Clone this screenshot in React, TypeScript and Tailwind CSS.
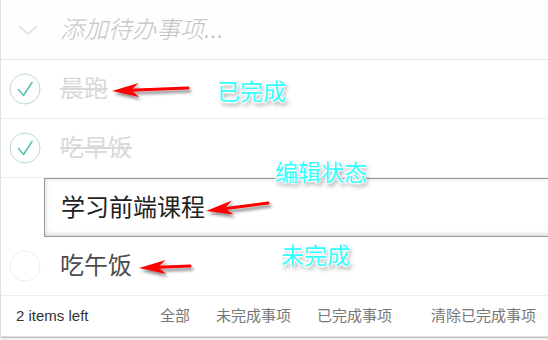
import React from 'react';

const CJK = "font-['Liberation_Sans','Noto_Sans_CJK_SC',sans-serif]";

type Arrow = { from: [number, number]; to: [number, number] };

const ARROWS: Arrow[] = [
  { from: [188, 88], to: [112, 91] },
  { from: [268, 203], to: [206, 211] },
  { from: [190, 266], to: [139, 268] },
];

// Swept-back red arrowhead, computed from tail -> tip direction.
function arrowPoints({ from, to }: Arrow) {
  const dx = to[0] - from[0];
  const dy = to[1] - from[1];
  const len = Math.hypot(dx, dy);
  const ux = dx / len;
  const uy = dy / len;
  const nx = -uy;
  const ny = ux;
  const at = (back: number, side: number) =>
    `${to[0] - ux * back + nx * side},${to[1] - uy * back + ny * side}`;
  const head = [at(0, 0), at(27, 7), at(19, 0), at(27, -7)].join(' ');
  const neck = at(18, 0).split(',').map(Number);
  return { head, neck };
}

function CheckCircle({ done }: { done: boolean }) {
  return (
    <svg width="34" height="34" viewBox="0 0 34 34" className="shrink-0">
      <circle cx="17" cy="17" r="15" fill="none" stroke={done ? '#bddad5' : '#ededed'} strokeWidth="1" />
      {done && (
        <path d="M10.5 17.5l5 6L24 10.5" fill="none" stroke="#5dc2af" strokeWidth="1.6" strokeLinecap="round" strokeLinejoin="round" />
      )}
    </svg>
  );
}

function Label({ text, className }: { text: string; className: string }) {
  return (
    <span
      className={`absolute ${CJK} text-[23px] leading-none text-[#3ff] [text-shadow:0_0_1px_#fff,0_0_2px_#fff,1px_1px_2px_#fff,-1px_-1px_2px_#fff,1px_-1px_2px_#fff,-1px_1px_2px_#fff,2px_3px_4px_rgba(0,0,0,0.55)] ${className}`}
    >
      {text}
    </span>
  );
}

export default function App() {
  const items = [
    { id: 1, title: '晨跑', done: true },
    { id: 2, title: '吃早饭', done: true },
  ];

  return (
    <div className={`relative w-[548px] h-[340px] overflow-hidden bg-[#f5f5f5] ${CJK}`}>
      <section className="w-[560px] bg-white border-l border-[#e0e0e0]">
        {/* Header / new todo */}
        <div className="h-[60px] flex items-center bg-[#fefefe] border-b border-[#e6e6e6]">
          <svg width="20" height="12" viewBox="0 0 20 12" className="ml-[17px] mt-[2px] shrink-0">
            <path d="M2 2l8 7 8-7" fill="none" stroke="#e6e6e6" strokeWidth="2.2" strokeLinecap="round" />
          </svg>
          <span className="ml-[22px] text-[24px] italic font-light text-[#c4c4c4] leading-none">
            添加待办事项...
          </span>
        </div>

        {/* Completed items */}
        {items.map((item) => (
          <div key={item.id} className="h-[59px] flex items-center border-b border-[#ededed]">
            <div className="ml-[7px]">
              <CheckCircle done={item.done} />
            </div>
            <span className="ml-[18px] text-[24px] leading-none text-[#d9d9d9] line-through">
              {item.title}
            </span>
          </div>
        ))}

        {/* Editing item */}
        <div className="h-[59px] pl-[43px]">
          <div className="h-[59px] flex items-center border border-[#999] shadow-[inset_0_-1px_5px_rgba(0,0,0,0.2)] pl-[16px]">
            <span className="text-[24px] leading-none text-[#222]">学习前端课程</span>
          </div>
        </div>

        {/* Active item */}
        <div className="h-[59px] flex items-center border-b border-[#ededed]">
          <div className="ml-[7px]">
            <CheckCircle done={false} />
          </div>
          <span className="ml-[18px] text-[24px] leading-none text-[#4d4d4d]">吃午饭</span>
        </div>

        {/* Footer */}
        <div className="h-[41px] flex items-center text-[15px] text-[#777] border-b border-[#dcdcdc] shadow-[0_1px_1px_rgba(0,0,0,0.2)]">
          <span className="w-[159px] pl-[15px] text-[#333]">2 items left</span>
          <span>全部</span>
          <span className="ml-[26px]">未完成事项</span>
          <span className="ml-[26px]">已完成事项</span>
          <span className="ml-[39px]">清除已完成事项</span>
        </div>
      </section>

      {/* Annotations */}
      <svg className="absolute inset-0 pointer-events-none" width="548" height="340">
        <defs>
          <filter id="arrowShadow" x="-20%" y="-50%" width="140%" height="200%">
            <feDropShadow dx="2" dy="3" stdDeviation="1.8" floodColor="#000" floodOpacity="0.45" />
          </filter>
        </defs>
        {ARROWS.map((a, i) => {
          const { head, neck } = arrowPoints(a);
          return (
            <g key={i} filter="url(#arrowShadow)">
              <line x1={a.from[0]} y1={a.from[1]} x2={neck[0]} y2={neck[1]} stroke="#f00" strokeWidth="3" strokeLinecap="round" />
              <polygon points={head} fill="#f00" />
            </g>
          );
        })}
      </svg>
      <Label text="已完成" className="left-[217px] top-[81px]" />
      <Label text="编辑状态" className="left-[275px] top-[162px]" />
      <Label text="未完成" className="left-[281px] top-[245px]" />
    </div>
  );
}
